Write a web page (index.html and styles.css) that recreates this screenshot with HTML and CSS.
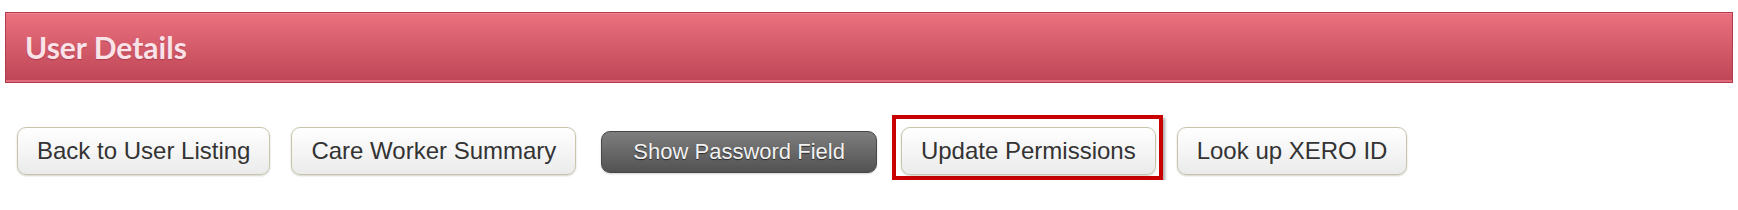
FILE: index.html
```html
<!DOCTYPE html>
<html lang="en">
<head>
  <meta charset="UTF-8" />
  <title>User Details</title>
  <link rel="stylesheet" href="styles.css">
</head>
<body>

<div class="panel-head">
  <h2>User Details</h2>
</div>

<div class="actions">
  <button class="btn">Back to User Listing</button>
  <button class="btn wide-gap">Care Worker Summary</button>
  <button class="btn btn-dark">Show Password Field</button>
  <!-- red frame marks the button in question -->
  <div class="marked">
    <button class="btn">Update Permissions</button>
  </div>
  <button class="btn">Look up XERO ID</button>
</div>

</body>
</html>
```

FILE: styles.css
```css
body {
  margin: 0 5px;
  padding-top: 12px;
  background: #fff;
  font-family: 'Liberation Sans', Arial, sans-serif;
}

.panel-head {
  height: 69px;
  border: 1px solid #b33a4c;
  background: linear-gradient(to bottom, #eb717f, #bd4555);
  box-shadow: inset 0 1px 0 #ef8692, inset 0 -2px 0 #e06b7b;
  display: flex;
  align-items: center;
  padding: 0 19px;
}

.panel-head h2 {
  margin: 0;
  font-family: Lato, 'Open Sans', sans-serif;
  font-weight: bold;
  font-size: 30px;
  color: #fae3e8;
  text-shadow: 0 1px 1px rgba(120, 20, 35, 0.35);
  padding-bottom: 2px;
}

.actions {
  display: flex;
  align-items: flex-end;
  margin-top: 32px;
  padding-left: 12px;
}

.btn {
  font-family: 'Liberation Sans', Arial, sans-serif;
  font-size: 24px;
  line-height: 28px;
  padding: 9px 19px;
  margin: 0 21px 5px 0;
  color: #333;
  background: linear-gradient(to bottom, #ffffff, #ebebeb);
  border: 1px solid #c8c5aa;
  border-radius: 9px;
  box-shadow: 0 1px 2px rgba(0, 0, 0, 0.18);
  cursor: pointer;
}

.wide-gap { margin-right: 25px; }

.btn-dark {
  font-size: 22px;
  line-height: 26px;
  padding: 7px 31px;
  margin: 0 15px 7px 0;
  color: #f2f2f2;
  background: linear-gradient(to bottom, #7e7e7e, #525252);
  border-color: #484848;
  text-shadow: 0 1px 1px rgba(0, 0, 0, 0.6);
}

.marked {
  display: flex;
  padding: 8px 3px 1px 5px;
  margin-right: 14px;
  border: 4px solid #c80000;
  box-shadow: 2px 3px 3px rgba(0, 0, 0, 0.35);
}

.marked .btn { margin: 0; }
```
